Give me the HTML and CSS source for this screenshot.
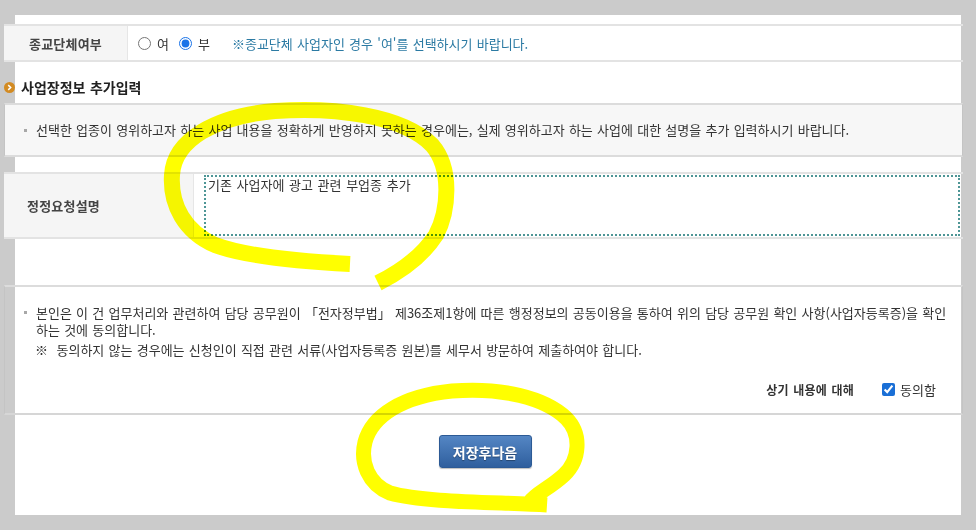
FILE: index.html
```html
<!DOCTYPE html>
<html lang="ko">
<head>
<meta charset="utf-8">
<title>사업장정보 추가입력</title>
<link rel="stylesheet" href="styles.css">
</head>
<body>
<div class="panel">
  <div class="content">
    <div class="row row-religion">
      <div class="label">종교단체여부</div>
      <div class="cell">
        <label class="opt"><input type="radio" name="rel"> 여</label>
        <label class="opt"><input type="radio" name="rel" checked> 부</label>
        <span class="note">※종교단체 사업자인 경우 '여'를 선택하시기 바랍니다.</span>
      </div>
    </div>

    <h3 class="heading"><span class="h-icon"><svg viewBox="0 0 12 12" width="11" height="11"><circle cx="6" cy="6" r="6" fill="#d38b22"/><path d="M4.6 3.4 L7.3 6 L4.6 8.6" fill="none" stroke="#fff" stroke-width="1.6"/></svg></span>사업장정보 추가입력</h3>

    <div class="notice">
      <p class="bullet">선택한 업종이 영위하고자 하는 사업 내용을 정확하게 반영하지 못하는 경우에는, 실제 영위하고자 하는 사업에 대한 설명을 추가 입력하시기 바랍니다.</p>
    </div>

    <div class="row row-desc">
      <div class="label">정정요청설명</div>
      <div class="cell">
        <textarea class="desc">기존 사업자에 광고 관련 부업종 추가</textarea>
      </div>
    </div>

    <div class="agree">
      <p class="bullet">본인은 이 건 업무처리와 관련하여 담당 공무원이 「전자정부법」 제36조제1항에 따른 행정정보의 공동이용을 통하여 위의 담당 공무원 확인 사항(사업자등록증)을 확인하는 것에 동의합니다.</p>
      <p class="warn">※&nbsp;&nbsp;동의하지 않는 경우에는 신청인이 직접 관련 서류(사업자등록증 원본)를 세무서 방문하여 제출하여야 합니다.</p>
      <div class="consent"><strong>상기 내용에 대해</strong><label class="chk"><input type="checkbox" checked> 동의함</label></div>
    </div>

    <div class="actions">
      <button class="btn" type="button">저장후다음</button>
    </div>
  </div>
</div>

<svg class="marker" width="976" height="530" viewBox="0 0 976 530">
  <path d="M350,264 C310,262 250,258 215,245 C185,232 170,205 172,175 C174,140 215,116 275,111 C335,107 402,115 432,145 C452,168 449,210 436,235 C421,258 400,272 378,283" fill="none" stroke="#ffff00" stroke-width="16" stroke-linejoin="round"/>
  <path d="M547,505 C500,502 425,503 390,493 C368,484 360,462 365,442 C372,416 402,396 452,391 C502,387 545,398 566,418 C582,434 580,460 564,475 C550,488 535,494 530,502" fill="none" stroke="#ffff00" stroke-width="15" stroke-linejoin="round"/>
</svg>
</body>
</html>
```

FILE: styles.css
```css
* { box-sizing: border-box; }

html, body {
  margin: 0;
  padding: 0;
}

body {
  position: relative;
  width: 976px;
  height: 530px;
  overflow: hidden;
  background: #cbcbcb;
  font-family: "Noto Sans CJK KR", "Noto Sans", sans-serif;
  font-size: 13px;
  color: #333;
  word-spacing: 0.6px;
}

.panel {
  margin: 15px 0 0 15px;
  width: 946px;
  height: 500px;
  background: #fff;
}

.content {
  margin-left: -11px;
  width: 959px;
  padding-top: 9px;
}

.row {
  display: flex;
  border-top: 2px solid #e3e3e3;
  border-bottom: 2px solid #e3e3e3;
}

.label {
  display: flex;
  align-items: center;
  background: #f5f5f5;
  border-right: 1px solid #e6e6e6;
  font-weight: bold;
  color: #444;
  letter-spacing: 0.2px;
}

.row-religion { height: 38px; }
.row-religion .label { width: 124px; padding-left: 25px; }
.row-religion .cell {
  display: flex;
  align-items: center;
  padding-left: 10px;
}

.opt {
  display: inline-flex;
  align-items: center;
  margin-right: 10px;
  color: #333;
}
.opt input {
  margin: 0 6px 0 0;
  width: 13px;
  height: 13px;
  accent-color: #1a73e8;
}
.note {
  margin-left: 12px;
  color: #2b7aa3;
}

.heading {
  margin: 16px 0 0;
  display: flex;
  align-items: center;
  height: 18px;
  font-size: 14px;
  font-weight: bold;
  color: #222;
}
.h-icon {
  display: inline-flex;
  width: 11px;
  height: 11px;
  margin-right: 6px;
}

.notice {
  margin-top: 7px;
  height: 54px;
  display: flex;
  align-items: center;
  background: #f7f7f7;
  border: 1px solid #c4c4c4;
  border-top: 2px solid #dcdcdc;
  border-bottom: 2px solid #dcdcdc;
  padding-left: 19px;
}

p { margin: 0; }

.bullet {
  position: relative;
  padding-left: 12px;
  line-height: 16px;
}
.bullet::before {
  content: "";
  position: absolute;
  left: 0;
  top: 7px;
  width: 3px;
  height: 3px;
  background: #a8a8a8;
}

.row-desc {
  margin-top: 15px;
  height: 67px;
}
.row-desc .label { width: 191px; padding-left: 23px; }
.row-desc .cell {
  flex: 1;
  padding: 1px 3px 0 10px;
}
.desc {
  display: block;
  width: 756px;
  height: 61px;
  margin: 0;
  padding: 0 2px;
  border: 2px dotted #4e9696;
  resize: none;
  font-family: inherit;
  font-size: 13px;
  line-height: 15px;
  color: #333;
  word-spacing: 1px;
}

.agree {
  margin-top: 46px;
  height: 130px;
  border: 1px solid #c4c4c4;
  border-top: 2px solid #dcdcdc;
  border-bottom: 2px solid #d6d6d6;
  padding: 17px 12px 0 19px;
}
.agree .bullet { line-height: 17px; }
.warn {
  margin-top: 3px;
  padding-left: 11px;
  line-height: 17px;
}
.consent {
  display: flex;
  justify-content: flex-end;
  align-items: center;
  margin-top: 22px;
  padding-right: 14px;
}
.consent strong { font-size: 12px; color: #333; letter-spacing: 0.3px; }
.chk {
  display: inline-flex;
  align-items: center;
  margin-left: 28px;
}
.chk input {
  margin: 0 5px 0 0;
  width: 13px;
  height: 13px;
  accent-color: #1a6fd6;
}

.actions {
  display: flex;
  justify-content: center;
  padding: 20px 0 0 3px;
}
.btn {
  width: 93px;
  height: 33px;
  border: 1px solid #2c5a95;
  border-radius: 3px;
  background: linear-gradient(#5486c4, #2f5f9e);
  color: #fff;
  font-family: inherit;
  font-size: 14px;
  font-weight: bold;
  text-shadow: 0 1px 1px rgba(0,0,0,0.35);
  box-shadow: 0 1px 1px rgba(0,0,0,0.25);
}

.marker {
  position: absolute;
  left: 0;
  top: 0;
  pointer-events: none;
  mix-blend-mode: multiply;
}
```
